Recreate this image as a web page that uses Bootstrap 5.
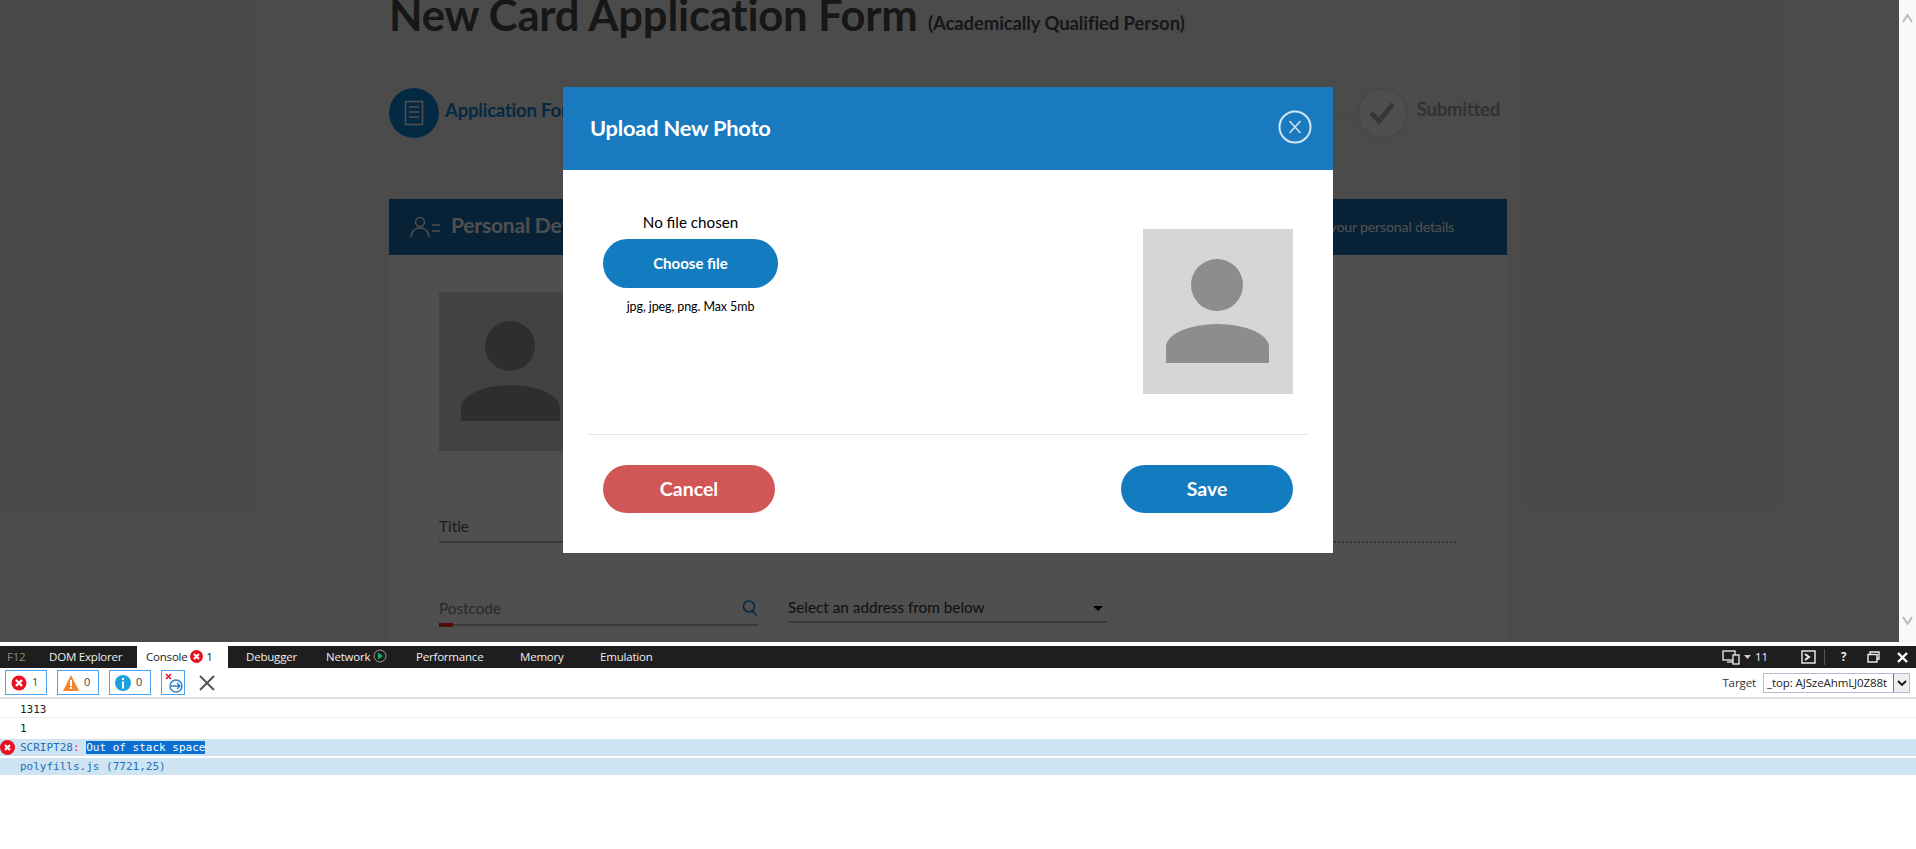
<!doctype html>
<html lang="en">
<head>
<meta charset="utf-8">
<title>New Card Application Form</title>
<link href="https://cdn.jsdelivr.net/npm/bootstrap@5.3.0/dist/css/bootstrap.min.css" rel="stylesheet">
<style>
html,body{height:849px;overflow:hidden;background:#fff;}
body{font-family:Lato,"Liberation Sans",sans-serif;color:#000;}
.vp{height:642px;}
.pane{width:1899px;background:#f0f0f0;}
.sbar{width:17px;background:#f9f9f9;padding:13px 0 16px;}
.inner{margin-left:389px;width:1118px;}
.ttl{height:50px;margin:-11px 0 49px;font-size:43.6px;line-height:50px;font-weight:700;color:#4c4c4c;letter-spacing:-.2px;white-space:nowrap;}
.ttl small{font-size:18.500px;font-weight:700;margin-left:0;letter-spacing:-.1px;vertical-align:1px;}
.stp{height:50px;margin-bottom:61px;}
.stepc{width:50px;height:50px;background:#0f84d8;}
.stepc2{width:47px;height:47px;background:#fff;box-shadow:0 0 3px #ccc;}
.stept{font-size:18.5px;font-weight:700;color:#0f84d8;margin:-5px 0 0 6px;letter-spacing:-.2px;}
.stept2{color:#a0a0a0;margin:-7px 0 0 11px;}
.arw{margin-right:10px;}
.lastgrp{margin-right:7px;}
.band{height:56px;background:#176eae;padding-left:21px;color:#fff;}
.band h2{font-size:21px;font-weight:700;margin:-4px 0 0 10px;letter-spacing:-.2px;}
.band p{font-size:14.200px;margin:0 53px 0 0;letter-spacing:-.2px;}
.panel{background:#fff;padding:37px 0 0 50px;height:400px;}
.pic{width:150px;height:159px;background:#d5d5d5;display:block;}
.frow{display:flex;gap:30px;}
.fld{width:319px;height:24px;font-size:15.3px;line-height:16px;}
.r1{margin-top:68px;}
.r2{margin-top:57px;}
.l1{border-bottom:2px solid #bbb;color:#5a5a5a;margin-top:0;line-height:14px;}
.l2{border-bottom:2px solid #bbb;color:#7f7f7f;height:26px;padding-top:0;}
.l3{border-bottom:2px dotted #aaa;}
.l4{border-bottom:2px solid #bbb;color:#333;height:23px;line-height:14px;}
.redbit{width:14px;height:4px;background:#f0301a;margin-top:-3px;}
.cap{width:0;height:0;border-left:5px solid transparent;border-right:5px solid transparent;border-top:5px solid #000;margin:6px 4px 0 0;}
.scrim{position:absolute;inset:0;background:rgba(0,0,0,.69);}
.dlg{margin:87px 0 0 563px;width:770px;background:#fff;}
.dlg .modal-header{height:83px;background:#1a7abf;color:#fff;padding:0 21px 0 27px;border:0;border-radius:0;}
.dlg h5{font-size:21.8px;font-weight:700;margin:0;letter-spacing:-.2px;}
.xbtn{width:34px;height:34px;background:none;border:0;padding:0;display:block;margin-top:-4px;}
.dbody{height:264px;padding:40px 40px 0;}
.fcol{width:175px;}
.nofile{font-size:15.2px;line-height:24px;margin-bottom:5px;}
.pick{width:175px;height:49px;background:#137bbf;border:0;color:#fff;font-size:15px;font-weight:700;border-radius:25px;padding:0;}
.hint{font-size:12.5px;line-height:18px;margin-top:10px;letter-spacing:-.1px;}
.pic2{width:150px;height:165px;background:#d6d6d6;margin-top:19px;display:block;}
.divi{height:1px;background:#e5e5e5;margin:0 25px;}
.dfoot{padding:30px 40px 40px;}
.act{width:172px;height:48px;border:0;border-radius:24px;color:#fff;font-size:19.5px;font-weight:700;padding:0;}
.act-n{background:#d15757;}
.act-s{background:#137bbf;}
.gap4{height:4px;background:#fff;}
.tabsbar{height:22px;background:#1e1e1e;color:#eee;font-family:"Open Sans",sans-serif;font-size:11.5px;letter-spacing:-.2px;padding-left:7px;}
.tabgrid{display:grid;grid-template-columns:42px 88px 109px 80px 90px 104px 80px 80px;line-height:22px;}
.tabon{background:#fff;color:#222;padding-left:9px;white-space:nowrap;width:91px;}
.tabon svg,.netw svg{vertical-align:-2px;}
.f12{color:#8a8a8a;}
.rgt{gap:0;margin-right:8px;}
.tools{height:31px;border-bottom:2px solid #ddd;padding:3px 6px 3px 5px;font-family:"Open Sans",sans-serif;font-size:12px;}
.tbtn{height:25px;width:42px;border:1px solid #4aa3ee;color:#444;margin-right:10px;padding-left:5px;gap:5px;font-size:11px;}
.tbtn2{width:24px;padding:0 0 0 3px;margin-right:14px;}
.tgt{color:#333;font-size:11.5px;margin-right:7px;letter-spacing:-.1px;}
.tsel{width:147px;height:20px;border:1px solid #b8b8d0;line-height:18px;padding-left:3px;font-size:11.5px;color:#222;overflow:hidden;white-space:nowrap;letter-spacing:-.1px;position:relative;}
.tarr{width:16px;height:18px;background:#eee;border-left:1px solid #777;flex:none;position:absolute;right:0;top:0;}
.con{font-family:"DejaVu Sans Mono",monospace;font-size:11px;line-height:17px;}
.ln{height:19px;border-bottom:1px solid #eee;padding-left:20px;color:#222;padding-top:2px;}
.ln2{height:19px;padding-top:2px;line-height:18px;border:0;}
.ln3{height:17px;background:#cfe4f3;color:#1a6fb8;padding-left:20px;margin-top:2px;position:relative;}
.ln4{margin-top:2px;}
.colon{color:#e81123;}
.sel{background:#0a6fd1;color:#fff;}
.erric{position:absolute;left:0;top:1px;}
.cnt{width:46px;}
.qm{width:26px;}
.closex{margin-left:17px;}
</style>
</head>
<body>
<div class="vp d-flex">
  <div class="pane position-relative overflow-hidden">
    <div class="inner">
      <h1 class="ttl">New Card Application Form <small>(Academically Qualified Person)</small></h1>
      <div class="stp d-flex justify-content-between align-items-center">
        <div class="d-flex align-items-center">
          <div class="stepc rounded-circle d-flex align-items-center justify-content-center">
            <svg width="20" height="26" viewBox="0 0 20 26" fill="none" stroke="#fff" stroke-width="1.6"><rect x="1.5" y="1.5" width="17" height="23"/><path d="M5 7h10M5 12h10M5 17h10"/></svg>
          </div>
          <span class="stept">Application Form</span>
        </div>
        <div class="d-flex align-items-center lastgrp">
          <svg class="arw" width="16" height="14" viewBox="0 0 16 14" fill="none" stroke="#e8e8e8" stroke-width="1.5"><path d="M0 7h15M9 1l6 6-6 6"/></svg>
          <div class="stepc2 rounded-circle d-flex align-items-center justify-content-center">
            <svg width="28" height="24" viewBox="0 0 28 24" fill="none" stroke="#b0b0b0" stroke-width="5"><path d="M3 12l8 8L25 3"/></svg>
          </div>
          <span class="stept stept2">Submitted</span>
        </div>
      </div>
      <div class="band d-flex align-items-center justify-content-between">
        <div class="d-flex align-items-center">
          <svg width="31" height="22" viewBox="0 0 31 22" fill="none" stroke="#fff" stroke-width="1.4"><circle cx="10" cy="6" r="4.5"/><path d="M1 21c0-12 18-12 18 0M22 9h8M22 15h8"/></svg>
          <h2>Personal Details</h2>
        </div>
        <p>Please enter your personal details</p>
      </div>
      <div class="panel">
        <svg class="pic" viewBox="0 0 150 159"><circle cx="71" cy="54" r="25" fill="#949494"/><path d="M22 129V116A49.500 23 0 0 1 121 116V129Z" fill="#949494"/></svg>
        <div class="frow r1">
          <div class="fld l1">Title</div>
          <div class="fld l1"></div>
          <div class="fld l3"></div>
        </div>
        <div class="frow r2">
          <div>
            <div class="fld l2 d-flex justify-content-between">Postcode
              <svg width="16" height="16" viewBox="0 0 16 16" fill="none" stroke="#0f84d8" stroke-width="1.6"><circle cx="7" cy="6.500" r="5.500"/><path d="M10.500 11l4 4.500"/></svg>
            </div>
            <div class="redbit"></div>
          </div>
          <div class="fld l4 d-flex justify-content-between align-items-start">Select an address from below<span class="cap"></span></div>
        </div>
      </div>
    </div>
    <div class="scrim d-flex align-items-start">
      <div class="dlg modal-content rounded-0 border-0">
        <div class="modal-header d-flex justify-content-between align-items-center">
          <h5>Upload New Photo</h5>
          <button class="xbtn" type="button" aria-label="Close">
            <svg width="34" height="34" viewBox="0 0 34 34" fill="none" stroke="#d6e7f4"><circle cx="17" cy="17" r="15.500" stroke-width="2"/><path d="M11.500 11l11 12M22.500 11l-11 12" stroke-width="1.400"/></svg>
          </button>
        </div>
        <div class="dbody d-flex justify-content-between align-items-start">
          <div class="fcol text-center">
            <div class="nofile">No file chosen</div>
            <button class="pick" type="button">Choose file</button>
            <div class="hint">jpg, jpeg, png. Max 5mb</div>
          </div>
          <svg class="pic2" viewBox="0 0 150 165"><circle cx="74" cy="56" r="26" fill="#8d8d8d"/><path d="M23 134V118A51.500 23 0 0 1 126 118V134Z" fill="#8d8d8d"/></svg>
        </div>
        <div class="divi"></div>
        <div class="dfoot d-flex justify-content-between">
          <button class="act act-n" type="button">Cancel</button>
          <button class="act act-s" type="button">Save</button>
        </div>
      </div>
    </div>
  </div>
  <div class="sbar d-flex flex-column justify-content-between align-items-center">
    <svg width="11" height="10" viewBox="0 0 11 10" fill="none" stroke="#bbb" stroke-width="2"><path d="M1 9l4.500-7L10 9"/></svg>
    <svg width="11" height="10" viewBox="0 0 11 10" fill="none" stroke="#bbb" stroke-width="2"><path d="M1 1l4.500 7L10 1"/></svg>
  </div>
</div>
<div class="gap4"></div>
<div class="tabsbar d-flex justify-content-between">
  <div class="tabgrid">
    <span class="f12">F12</span>
    <span>DOM Explorer</span>
    <span class="tabon">Console <svg width="13" height="13" viewBox="0 0 13 13"><circle cx="6.500" cy="6.500" r="6.500" fill="#e81123"/><path d="M4 4l5 5M9 4l-5 5" stroke="#fff" stroke-width="2"/></svg> 1</span>
    <span>Debugger</span>
    <span class="netw">Network <svg width="14" height="14" viewBox="0 0 14 14"><circle cx="7" cy="7" r="6" fill="none" stroke="#999"/><path d="M5 3.500l5 3.500-5 3.500z" fill="#10b070"/></svg></span>
    <span>Performance</span>
    <span>Memory</span>
    <span>Emulation</span>
  </div>
  <div class="d-flex align-items-center rgt">
    <svg class="me-1" width="18" height="15" viewBox="0 0 18 15" fill="none" stroke="#eee" stroke-width="1.300"><rect x="1" y="1" width="12" height="9"/><path d="M5 12h6"/><rect x="11" y="5" width="6" height="9" fill="#1e1e1e"/></svg>
    <svg width="7" height="4" viewBox="0 0 7 4"><path d="M0 0h7L3.500 4z" fill="#ccc"/></svg>
    <span class="ms-1 cnt">11</span>
    <svg width="15" height="14" viewBox="0 0 15 14" fill="none" stroke="#eee" stroke-width="1.400"><rect x="1" y="1" width="13" height="12"/><path d="M4 4l4 3-4 3" stroke-width="2"/></svg>
    <svg class="mx-2" width="1" height="16"><rect width="1" height="16" fill="#555"/></svg>
    <b class="ms-2 qm">?</b>
    <svg width="13" height="12" viewBox="0 0 13 12" fill="none" stroke="#eee" stroke-width="1.400"><path d="M3 3V1h9v7h-2"/><rect x="1" y="3.500" width="9" height="7.500"/></svg>
    <svg class="closex" width="11" height="11" viewBox="0 0 11 11" stroke="#fff" stroke-width="2.400"><path d="M1 1l9 9M10 1l-9 9"/></svg>
  </div>
</div>
<div class="tools d-flex align-items-center">
  <div class="tbtn d-flex align-items-center"><svg width="16" height="16" viewBox="0 0 16 16"><circle cx="8" cy="8" r="7.500" fill="#e81123"/><path d="M5 5l6 6M11 5l-6 6" stroke="#fff" stroke-width="2.400"/></svg><span>1</span></div>
  <div class="tbtn d-flex align-items-center"><svg width="16" height="16" viewBox="0 0 16 16"><path d="M8 0l8 16H0z" fill="#f2862a"/><path d="M8 5v6M8 12v2" stroke="#fff" stroke-width="2"/></svg><span>0</span></div>
  <div class="tbtn d-flex align-items-center"><svg width="16" height="16" viewBox="0 0 16 16"><circle cx="8" cy="8" r="8" fill="#1ba1e2"/><path d="M8 6.500v7M8 3v2" stroke="#fff" stroke-width="2"/></svg><span>0</span></div>
  <div class="tbtn tbtn2 d-flex align-items-center"><svg width="18" height="20" viewBox="0 0 18 20" fill="none"><path d="M1 1l5 5M6 1L1 6" stroke="#e81123" stroke-width="1.600"/><circle cx="11" cy="13" r="6" stroke="#2a7fc9" stroke-width="1.400"/><path d="M6 13h9M12 10l3 3-3 3" stroke="#2a7fc9" stroke-width="1.400"/></svg></div>
  <svg width="16" height="16" viewBox="0 0 16 16" stroke="#555" stroke-width="2"><path d="M1 1l14 14M15 1L1 15"/></svg>
  <div class="ms-auto d-flex align-items-center">
    <span class="tgt">Target</span>
    <div class="tsel">_top: AJSzeAhmLJ0Z88t<span class="tarr d-flex align-items-center justify-content-center"><svg width="10" height="6" viewBox="0 0 10 6" fill="none" stroke="#111" stroke-width="1.800"><path d="M1 1l4 4 4-4"/></svg></span></div>
  </div>
</div>
<div class="con">
  <div class="ln">1313</div>
  <div class="ln ln2">1</div>
  <div class="ln3"><svg class="erric" width="15" height="15" viewBox="0 0 15 15"><circle cx="7.500" cy="7.500" r="7.500" fill="#e81123"/><path d="M5 5l5 5M10 5l-5 5" stroke="#fff" stroke-width="2.200"/></svg>SCRIPT28<span class="colon">:</span> <span class="sel">Out of stack space</span></div>
  <div class="ln3 ln4">polyfills.js (7721,25)</div>
</div>
<script src="https://cdn.jsdelivr.net/npm/bootstrap@5.3.0/dist/js/bootstrap.bundle.min.js"></script>
</body>
</html>
